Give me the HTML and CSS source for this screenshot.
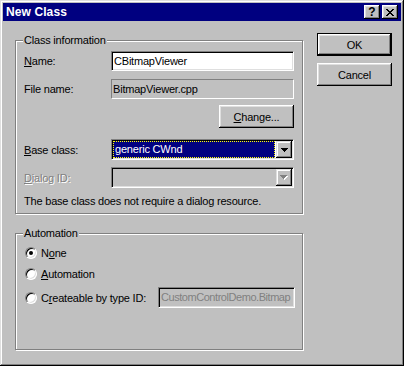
FILE: index.html
```html
<!DOCTYPE html>
<html>
  <head>
    <meta charset="utf-8" />
    <title>New Class</title>
    <link rel="stylesheet" href="styles.css">
  </head>
  <body>
    <div class="window">
      <div class="titlebar">
        <span class="title">New Class</span>
        <div class="title-buttons">
          <div class="tbtn tbtn-help">?</div>
          <div class="tbtn">
            <svg width="8" height="7" viewBox="0 0 8 7" shape-rendering="crispEdges">
              <path d="M0 0h2v1h1v1h2v-1h1v-1h2v1h-1v1h-1v1h-1v1h1v1h1v1h1v1h-2v-1h-1v-1h-2v1h-1v1h-2v-1h1v-1h1v-1h1v-1h-1v-1h-1v-1h-1z" fill="#000"/>
            </svg>
          </div>
        </div>
      </div>

      <div class="dialog">
        <div class="main">
          <!-- Class information -->
          <div class="group group-info">
            <span class="group-label">Class information</span>

            <div class="row row-name">
              <span class="label"><u>N</u>ame:</span>
              <div class="edit">CBitmapViewer</div>
            </div>

            <div class="row row-file">
              <span class="label">File name:</span>
              <div class="static-box">BitmapViewer.cpp</div>
            </div>

            <div class="row row-change">
              <button class="btn"><u>C</u>hange...</button>
            </div>

            <div class="row row-base">
              <span class="label"><u>B</u>ase class:</span>
              <div class="combo">
                <div class="combo-value"><span class="selected">generic CWnd</span></div>
                <div class="combo-arrow">
                  <svg width="7" height="4" viewBox="0 0 7 4" shape-rendering="crispEdges">
                    <path d="M0 0H7V1H6V2H5V3H4V4H3V3H2V2H1V1H0Z" fill="#000"/>
                  </svg>
                </div>
              </div>
            </div>

            <div class="row row-dialog">
              <span class="label label-disabled"><u>D</u>ialog ID:</span>
              <div class="combo combo-disabled">
                <div class="combo-value"></div>
                <div class="combo-arrow">
                  <svg width="8" height="5" viewBox="0 0 8 5" shape-rendering="crispEdges">
                    <path d="M1 1H8V2H7V3H6V4H5V5H4V4H3V3H2V2H1Z" fill="#fff"/>
                    <path d="M0 0H7V1H6V2H5V3H4V4H3V3H2V2H1V1H0Z" fill="#808080"/>
                  </svg>
                </div>
              </div>
            </div>

            <p class="note">The base class does not require a dialog resource.</p>
          </div>

          <!-- Automation -->
          <div class="group group-auto">
            <span class="group-label">Automation</span>

            <div class="radio-row radio-first">
              <span class="radio checked"></span>
              <span>N<u>o</u>ne</span>
            </div>
            <div class="radio-row">
              <span class="radio"></span>
              <span><u>A</u>utomation</span>
            </div>
            <div class="radio-row radio-type">
              <span class="radio"></span>
              <span>C<u>r</u>eateable by type ID:</span>
              <div class="edit edit-disabled">CustomControlDemo.Bitmap</div>
            </div>
          </div>
        </div>

        <div class="side">
          <button class="btn btn-default">OK</button>
          <button class="btn btn-cancel">Cancel</button>
        </div>
      </div>
    </div>
  </body>
</html>
```

FILE: styles.css
```css
body {
  margin: 0;
  padding: 0;
  background: #c0c0c0;
  font-family: "Liberation Sans", Arial, sans-serif;
  font-size: 11px;
  letter-spacing: -0.2px;
  color: #000;
}

u {
  text-decoration: underline;
  text-underline-offset: 1px;
}

/* Window frame */
.window {
  width: 404px;
  height: 366px;
  box-sizing: border-box;
  padding: 3px;
  background: #c0c0c0;
  box-shadow: inset -1px -1px #000, inset 1px 1px #dfdfdf,
    inset -2px -2px #808080, inset 2px 2px #fff;
}

/* Title bar */
.titlebar {
  height: 18px;
  background: #000080;
  display: flex;
  align-items: center;
  justify-content: space-between;
  padding: 0 3px;
}

.title {
  color: #fff;
  font-weight: bold;
  font-size: 12px;
  letter-spacing: 0.1px;
}

.title-buttons {
  display: flex;
  gap: 2px;
}

.tbtn {
  width: 16px;
  height: 14px;
  background: #c0c0c0;
  box-shadow: inset -1px -1px #000, inset 1px 1px #fff,
    inset -2px -2px #808080, inset 2px 2px #dfdfdf;
  display: flex;
  align-items: center;
  justify-content: center;
}

.tbtn-help {
  font-weight: bold;
  font-size: 12px;
  line-height: 14px;
  letter-spacing: 0;
}

/* Dialog body */
.dialog {
  display: flex;
  padding-left: 12px;
}

.main {
  width: 288px;
  margin-top: 19px;
}

.side {
  display: flex;
  flex-direction: column;
  margin-top: 12px;
  margin-left: 14px;
}

/* Group boxes */
.group {
  position: relative;
  box-sizing: border-box;
  border: 1px solid #808080;
  box-shadow: inset 1px 1px #fff, 1px 1px #fff;
  padding: 0 8px;
}

.group-label {
  position: absolute;
  top: -7px;
  left: 7px;
  padding: 0 1px;
  line-height: 13px;
  background: #c0c0c0;
}

.group-info {
  height: 174px;
  padding-top: 10px;
}

.group-auto {
  height: 117px;
  margin-top: 19px;
  padding-top: 11px;
  padding-left: 9px;
  padding-right: 7px;
}

/* Form rows */
.row {
  display: flex;
  align-items: center;
}

.label {
  width: 87px;
  flex-shrink: 0;
}

.label-disabled {
  color: #808080;
  text-shadow: 1px 1px #fff;
}

.row-file { margin-top: 8px; }
.row-change { margin-top: 6px; justify-content: flex-end; }
.row-base { margin-top: 11px; }
.row-dialog { margin-top: 7px; }

.note {
  margin: 7px 0 0;
  line-height: 13px;
}

/* Fields */
.edit {
  width: 183px;
  height: 20px;
  box-sizing: border-box;
  background: #fff;
  border: 1px solid;
  border-color: #808080 #fff #fff #808080;
  box-shadow: inset 1px 1px #000, inset -1px -1px #dfdfdf;
  padding-left: 2px;
  line-height: 18px;
  white-space: nowrap;
  overflow: hidden;
}

.edit-disabled {
  width: 137px;
  height: 21px;
  line-height: 19px;
  margin-left: auto;
  background: #c0c0c0;
  color: #808080;
  padding-left: 2px;
  letter-spacing: -0.45px;
}

.static-box {
  width: 183px;
  height: 20px;
  box-sizing: border-box;
  border: 1px solid;
  border-color: #808080 #fff #fff #808080;
  padding-left: 1px;
  line-height: 18px;
}

.combo {
  width: 183px;
  height: 21px;
  box-sizing: border-box;
  display: flex;
  padding: 1px;
  background: #fff;
  border: 1px solid;
  border-color: #808080 #fff #fff #808080;
  box-shadow: inset 1px 1px #000, inset -1px -1px #dfdfdf;
}

.combo-disabled {
  background: #c0c0c0;
}

.combo-value {
  flex: 1;
  display: flex;
  margin-right: 1px;
}

.selected {
  flex: 1;
  background: #000080;
  color: #fff;
  border: 1px dotted #ffff00;
  padding-left: 1px;
  line-height: 15px;
}

.combo-arrow {
  width: 16px;
  background: #c0c0c0;
  box-shadow: inset -1px -1px #000, inset 1px 1px #dfdfdf,
    inset -2px -2px #808080, inset 2px 2px #fff;
  display: flex;
  align-items: center;
  justify-content: center;
}

/* Buttons */
.btn {
  width: 75px;
  height: 23px;
  box-sizing: border-box;
  padding: 0;
  border: none;
  background: #c0c0c0;
  font-family: inherit;
  font-size: 11px;
  letter-spacing: -0.2px;
  color: #000;
  box-shadow: inset -1px -1px #000, inset 1px 1px #fff,
    inset -2px -2px #808080, inset 2px 2px #dfdfdf;
}

.btn-default {
  border: 1px solid #000;
}

.btn-cancel {
  margin-top: 7px;
}

/* Radio buttons */
.radio-row {
  display: flex;
  align-items: center;
  gap: 4px;
  height: 16px;
  margin-top: 5px;
}

.radio-first {
  margin-top: 0;
}

.radio-type {
  height: 21px;
}

.radio {
  position: relative;
  width: 12px;
  height: 12px;
  box-sizing: border-box;
  border-radius: 50%;
  background: #fff;
  border: 1px solid;
  border-color: #808080 #fff #fff #808080;
  box-shadow: inset 1px 1px #000, inset -1px -1px #dfdfdf;
}

.radio.checked::after {
  content: "";
  position: absolute;
  left: 3px;
  top: 3px;
  width: 4px;
  height: 4px;
  border-radius: 50%;
  background: #000;
}
```
